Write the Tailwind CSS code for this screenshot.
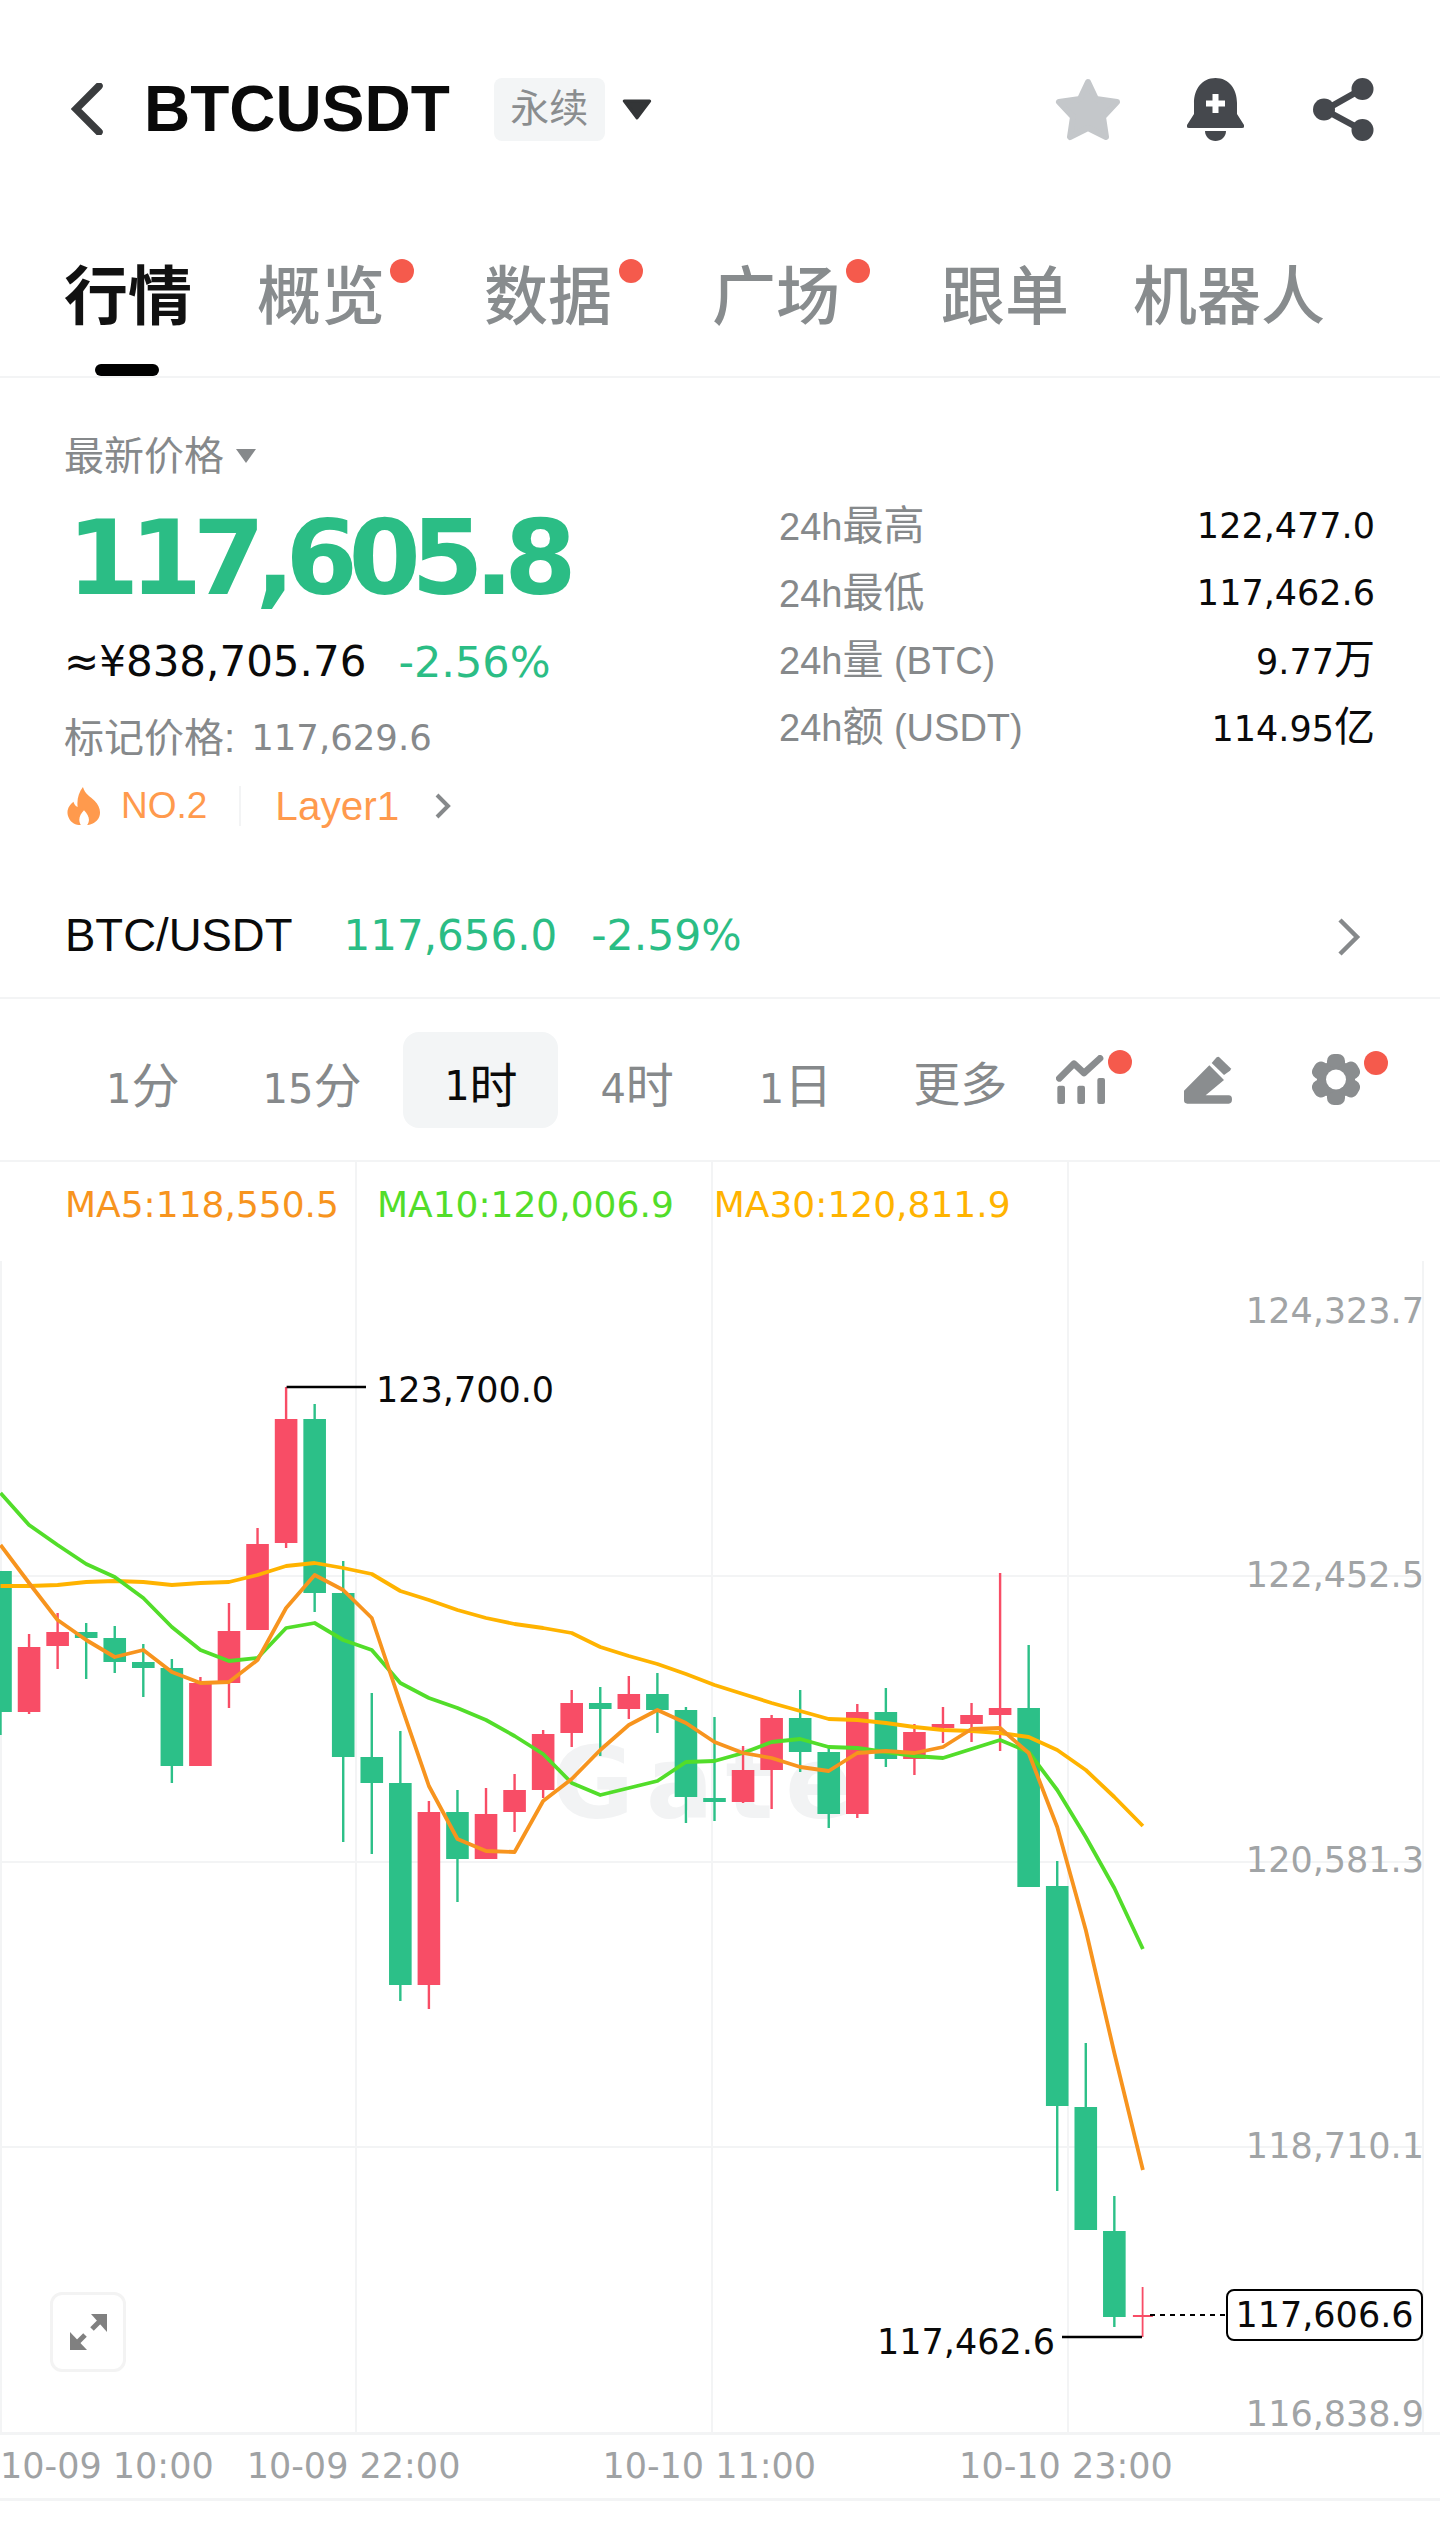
<!DOCTYPE html>
<html lang="zh-CN">
  <head>
    <meta charset="UTF-8" />
    <meta name="viewport" content="width=device-width, initial-scale=1.0" />
    <title>BTCUSDT 永续</title>
    <script src="https://cdn.jsdelivr.net/npm/@tailwindcss/browser@4"></script>
  </head>
  <body class="bg-white min-h-screen font-['Liberation_Sans','Noto_Sans_CJK_SC',sans-serif]">
    <div class="w-[1440px] h-[2521px] overflow-hidden">
      <!-- header -->
      <header class="h-[216px] pt-[2px] flex items-center pl-[71px]">
        <svg class="w-[32px] h-[52px]" viewBox="0 0 32 52" fill="none">
          <polyline points="28,3 5,26 28,49" stroke="#3a3c3e" stroke-width="7.5" stroke-linecap="round" stroke-linejoin="miter" />
        </svg>
        <h1 class="ml-[41px] text-[64px] leading-[64px] font-bold text-[#0a0a0a]">BTCUSDT</h1>
        <span class="ml-[44px] w-[111px] h-[63px] rounded-lg bg-[#f3f5f6] flex items-center justify-center text-[39px] text-[#8a8d8f]">永续</span>
        <svg class="ml-[16px] w-[32px] h-[21px]" viewBox="0 0 30 20">
          <path d="M3 2 H27 L15 18 Z" fill="#333537" stroke="#333537" stroke-width="3" stroke-linejoin="round" />
        </svg>
        <div class="ml-auto mr-[66px] flex items-center">
          <svg class="w-[66px] h-[63px]" viewBox="0 0 66 63">
            <path d="M33 4 L41 21 L62 24 L48 39 L51 59 L33 50 L15 59 L18 39 L4 24 L25 21 Z" fill="#c4c7ca" stroke="#c4c7ca" stroke-width="6" stroke-linejoin="round" />
          </svg>
          <svg class="ml-[66px] w-[57px] h-[63px]" viewBox="0 0 57 63">
            <path d="M28.5 0 C15 0 7 11 7 25 V36 L0 47 Q-1 50 2 50 H55 Q58 50 57 47 L50 36 V25 C50 11 42 0 28.5 0 Z" fill="#45484d" />
            <path d="M18 53 H39 C39 59 34 63 28.5 63 C23 63 18 59 18 53 Z" fill="#45484d" />
            <path d="M28.5 16 V35 M19 25.5 H38" stroke="#ffffff" stroke-width="6" />
          </svg>
          <svg class="ml-[69px] w-[61px] h-[63px]" viewBox="0 0 61 63" fill="#45484d">
            <path d="M49 11 L12 32 L49 52" fill="none" stroke="#45484d" stroke-width="6.5" />
            <circle cx="49.5" cy="11" r="11" />
            <circle cx="11" cy="31.5" r="11" />
            <circle cx="49.5" cy="52" r="11" />
          </svg>
        </div>
      </header>

      <!-- tabs -->
      <nav class="relative h-[162px] border-b-2 border-[#f3f4f5] flex pl-[64px] pt-[49px] text-[64px] leading-[64px] font-medium text-[#888c8e]">
        <a class="relative font-bold text-[#111111]">行情
          <span class="absolute left-[31px] top-[99px] w-[64px] h-[12px] rounded-md bg-black"></span>
        </a>
        <a class="relative ml-[65px]">概览<span class="absolute left-[133px] -top-[6px] w-[24px] h-[24px] rounded-full bg-[#f55a4c]"></span></a>
        <a class="relative ml-[99px]">数据<span class="absolute left-[135px] -top-[6px] w-[24px] h-[24px] rounded-full bg-[#f55a4c]"></span></a>
        <a class="relative ml-[100px]">广场<span class="absolute left-[134px] -top-[6px] w-[24px] h-[24px] rounded-full bg-[#f55a4c]"></span></a>
        <a class="ml-[101px]">跟单</a>
        <a class="ml-[64px]">机器人</a>
      </nav>

      <!-- price summary -->
      <section class="flex justify-between pl-[64px] pr-[65px] h-[450px]">
        <div>
          <div class="pt-[58px] flex items-center text-[40px] leading-[40px] text-[#86898b]">
            最新价格
            <svg class="ml-[12px] w-[20px] h-[14px]" viewBox="0 0 20 14"><path d="M0 0 H20 L10 14 Z" fill="#86898b" /></svg>
          </div>
          <div class="mt-[28px] ml-[3px] font-['DejaVu_Sans',sans-serif] font-bold text-[104px] leading-[108px] tracking-[-9.5px] text-[#2bbd85]">117,605.8</div>
          <div class="mt-[26px] flex text-[42px] leading-[48px] font-['DejaVu_Sans','Noto_Sans_CJK_SC',sans-serif]">
            <span class="text-[#0a0a0a]">≈¥838,705.76</span>
            <span class="ml-[32px] text-[43px] text-[#2bbd85]">-2.56%</span>
          </div>
          <div class="mt-[30px] flex items-center text-[#86898b] leading-[44px]">
            <span class="text-[40px]">标记价格:</span>
            <span class="ml-[16px] text-[35.5px] font-['DejaVu_Sans',sans-serif]">117,629.6</span>
          </div>
          <div class="mt-[24px] flex items-center leading-[44px] text-[#ff9a4d]">
            <svg class="ml-[3px] w-[34px] h-[38px]" viewBox="0 0 32 36">
              <path d="M15 0 C17 7 22 9 26 13 C32 19 33 27 28 32 C25 35 21 36 19 36 C22 32 21 27 16 22 C12 26 10 31 13 36 C8 36 4 34 2 30 C-2 23 2 17 6 14 C7 17 8 18 10 19 C9 12 11 5 15 0 Z" fill="#ff9a4d" />
            </svg>
            <span class="ml-[20px] text-[37px]">NO.2</span>
            <span class="ml-[32px] w-[2px] h-[40px] bg-[#f3f4f5]"></span>
            <span class="ml-[34px] text-[40.5px]">Layer1</span>
            <svg class="ml-[36px] w-[16px] h-[26px]" viewBox="0 0 16 26" fill="none">
              <polyline points="2,2 13,13 2,24" stroke="#86898b" stroke-width="4" />
            </svg>
          </div>
        </div>
        <dl class="w-[596px] pt-[115px] text-[#86898b]">
          <div class="h-[67px] flex items-center justify-between">
            <dt class="text-[38px]">24h<span class="text-[41px]">最高</span></dt>
            <dd class="text-[35px] text-[#0a0a0a] font-['DejaVu_Sans',sans-serif]">122,477.0</dd>
          </div>
          <div class="h-[67px] flex items-center justify-between">
            <dt class="text-[38px]">24h<span class="text-[41px]">最低</span></dt>
            <dd class="text-[35px] text-[#0a0a0a] font-['DejaVu_Sans',sans-serif]">117,462.6</dd>
          </div>
          <div class="h-[67px] flex items-center justify-between">
            <dt class="text-[38px]">24h<span class="text-[41px]">量</span> (BTC)</dt>
            <dd class="text-[35px] text-[#0a0a0a] font-['DejaVu_Sans','Noto_Sans_CJK_SC',sans-serif]">9.77<span class="text-[41px]">万</span></dd>
          </div>
          <div class="h-[67px] flex items-center justify-between">
            <dt class="text-[38px]">24h<span class="text-[41px]">额</span> (USDT)</dt>
            <dd class="text-[35px] text-[#0a0a0a] font-['DejaVu_Sans','Noto_Sans_CJK_SC',sans-serif]">114.95<span class="text-[41px]">亿</span></dd>
          </div>
        </dl>
      </section>

      <!-- spot pair row -->
      <div class="h-[171px] pt-[83px] pl-[65px] pr-[79px] border-b-2 border-[#f3f4f5] flex items-start leading-[50px]">
        <span class="text-[45.5px] text-[#0a0a0a]">BTC/USDT</span>
        <span class="ml-[51px] text-[42px] text-[#2bbd85] font-['DejaVu_Sans',sans-serif]">117,656.0</span>
        <span class="ml-[34px] text-[42.5px] text-[#2bbd85] font-['DejaVu_Sans',sans-serif]">-2.59%</span>
        <svg class="ml-auto mt-[7px] w-[24px] h-[38px]" viewBox="0 0 24 38" fill="none">
          <polyline points="3,2 20,19 3,36" stroke="#86898b" stroke-width="4.5" />
        </svg>
      </div>

      <!-- interval toolbar -->
      <div class="h-[163px] border-b-2 border-[#f3f4f5] flex items-center text-[#86898b] font-['DejaVu_Sans','Noto_Sans_CJK_SC',sans-serif] text-[40px]">
        <span class="ml-[106px] pt-[12px]">1<span class="text-[48px]">分</span></span>
        <span class="ml-[83px] pt-[12px]">15<span class="text-[48px]">分</span></span>
        <span class="ml-[42px] w-[155px] h-[96px] pt-[12px] rounded-2xl bg-[#f3f5f6] text-[#0a0a0a] flex items-center justify-center">1<span class="text-[48px]">时</span></span>
        <span class="ml-[42px] pt-[12px]">4<span class="text-[48px]">时</span></span>
        <span class="ml-[85px] pt-[12px]">1<span class="text-[48px]">日</span></span>
        <span class="ml-[81px] pt-[12px] text-[47px]">更多</span>
        <div class="relative ml-[49px] w-[49px] h-[49px]">
          <svg class="w-[49px] h-[49px]" viewBox="48 78 147 147" fill="#8a8d8f">
            <rect x="52" y="170" width="23" height="55" rx="6" />
            <rect x="112" y="170" width="23" height="55" rx="6" />
            <rect x="172" y="147" width="23" height="78" rx="6" />
            <polyline points="58,148 102,104 132,132 180,88" fill="none" stroke="#8a8d8f" stroke-width="20" stroke-linecap="round" stroke-linejoin="round" />
          </svg>
          <span class="absolute left-[52px] -top-[5px] w-[24px] h-[24px] rounded-full bg-[#f55a4c]"></span>
        </div>
        <svg class="ml-[79px] w-[48px] h-[48px]" viewBox="432 80 144 142" fill="#8a8d8f">
          <path d="M432 183 L508 107 L552 151 L497 197 H566 Q576 197 576 209 Q576 222 566 222 H442 Q432 222 432 212 Z" />
          <path d="M537 82 L572 116 Q574 120 570 123 L552 136 L515 100 L530 83 Q534 80 537 82 Z" />
        </svg>
        <div class="relative ml-[80px] w-[48px] h-[51px]">
          <svg class="w-[48px] h-[51px]" viewBox="0 0 48 51" fill="#8a8d8f">
            <circle cx="24" cy="25.5" r="19" />
            <rect x="15" y="0" width="18" height="51" rx="7" />
            <rect x="15" y="0" width="18" height="51" rx="7" transform="rotate(60 24 25.5)" />
            <rect x="15" y="0" width="18" height="51" rx="7" transform="rotate(120 24 25.5)" />
            <circle cx="24" cy="25.5" r="10" fill="#ffffff" />
          </svg>
          <span class="absolute left-[52px] -top-[3px] w-[24px] h-[24px] rounded-full bg-[#f55a4c]"></span>
        </div>
      </div>

      <!-- chart -->
      <div class="relative h-[1270px] font-['DejaVu_Sans',sans-serif]">
        <svg id="chart" class="absolute inset-0 w-[1440px] h-[1270px]" viewBox="0 1162 1440 1270"></svg>

        <div class="relative flex pl-[65px] pt-[24px] text-[36px] leading-[38px]">
          <span class="text-[#f7941e]">MA5:118,550.5</span>
          <span class="ml-[38px] text-[#52dd2a]">MA10:120,006.9</span>
          <span class="ml-[40px] text-[#ffb300]">MA30:120,811.9</span>
        </div>

        <span class="absolute right-[16px] top-[129px] text-[35px] leading-[40px] text-[#a1a4a6]">124,323.7</span>
        <span class="absolute right-[16px] top-[393px] text-[35px] leading-[40px] text-[#a1a4a6]">122,452.5</span>
        <span class="absolute right-[16px] top-[678px] text-[35px] leading-[40px] text-[#a1a4a6]">120,581.3</span>
        <span class="absolute right-[16px] top-[964px] text-[35px] leading-[40px] text-[#a1a4a6]">118,710.1</span>
        <span class="absolute right-[16px] top-[1232px] text-[35px] leading-[40px] text-[#a1a4a6]">116,838.9</span>

        <span class="absolute left-[376px] top-[208px] text-[35px] leading-[40px] text-[#0a0a0a]">123,700.0</span>
        <span class="absolute left-[877px] top-[1160px] text-[35px] leading-[40px] text-[#0a0a0a]">117,462.6</span>
        <span class="absolute left-[1226px] top-[1127px] w-[197px] h-[52px] rounded-lg border-2 border-black bg-white flex items-center justify-center text-[35px] text-[#0a0a0a]">117,606.6</span>

        <button class="absolute left-[50px] top-[1130px] w-[76px] h-[80px] rounded-xl border-[3px] border-[#f3f3f3] bg-white flex items-center justify-center">
          <svg class="w-[37px] h-[36px]" viewBox="0 0 37 36" fill="#808080">
            <path d="M21 0 H37 V18 Z" />
            <path d="M0 18 V36 H17 Z" />
            <path d="M30 7 L22 15 M7 29 L15 21" stroke="#808080" stroke-width="5" />
          </svg>
        </button>
      </div>

      <!-- time axis -->
      <div class="h-[69px] border-t-[3px] border-b-[3px] border-[#f3f4f5] flex items-center text-[35px] text-[#9fa2a4] font-['DejaVu_Sans',sans-serif]">
        <span>10-09 10:00</span>
        <span class="ml-[33px]">10-09 22:00</span>
        <span class="ml-[142px]">10-10 11:00</span>
        <span class="ml-[143px]">10-10 23:00</span>
      </div>
    </div>

    <script>
      // candle values are page pixels: wick top, body top, body bottom, wick bottom
      const candles = [
        ["g", 1571, 1571, 1712, 1735], ["r", 1634, 1647, 1712, 1714], ["r", 1613, 1632, 1646, 1669],
        ["g", 1623, 1632, 1638, 1679], ["g", 1626, 1638, 1662, 1673], ["g", 1644, 1662, 1668, 1697],
        ["g", 1659, 1668, 1766, 1783], ["r", 1677, 1683, 1766, 1766], ["r", 1603, 1631, 1683, 1708],
        ["r", 1528, 1544, 1630, 1630], ["r", 1387, 1419, 1543, 1548], ["g", 1404, 1419, 1593, 1612],
        ["g", 1561, 1593, 1757, 1842], ["g", 1693, 1757, 1783, 1854], ["g", 1731, 1783, 1985, 2001],
        ["r", 1801, 1812, 1985, 2009], ["g", 1790, 1812, 1859, 1902], ["r", 1788, 1814, 1859, 1859],
        ["r", 1774, 1790, 1812, 1832], ["r", 1730, 1734, 1790, 1798], ["r", 1690, 1703, 1733, 1747],
        ["g", 1687, 1703, 1709, 1756], ["r", 1676, 1694, 1709, 1719], ["g", 1673, 1694, 1710, 1733],
        ["g", 1707, 1710, 1797, 1823], ["g", 1717, 1798, 1802, 1821], ["r", 1746, 1770, 1802, 1803],
        ["r", 1715, 1718, 1770, 1809], ["g", 1690, 1718, 1752, 1772], ["g", 1748, 1752, 1814, 1828],
        ["r", 1704, 1712, 1814, 1818], ["g", 1688, 1712, 1759, 1767], ["r", 1724, 1732, 1759, 1775],
        ["r", 1707, 1724, 1728, 1743], ["r", 1703, 1715, 1724, 1742], ["r", 1573, 1708, 1715, 1751],
        ["g", 1645, 1708, 1887, 1887], ["g", 1861, 1886, 2106, 2191], ["g", 2043, 2107, 2230, 2230],
        ["g", 2196, 2231, 2317, 2327], ["r", 2287, 2315, 2317, 2337],
      ];
      const ma5 = [1545, 1583, 1620, 1640, 1657, 1650, 1672, 1683, 1682, 1660, 1608, 1575, 1590, 1618, 1703, 1786, 1839, 1851, 1852, 1801, 1779, 1750, 1725, 1710, 1723, 1742, 1753, 1758, 1767, 1771, 1753, 1751, 1753, 1747, 1729, 1728, 1753, 1827, 1930, 2053, 2170];
      const ma10 = [1493, 1525, 1545, 1564, 1577, 1598, 1627, 1650, 1661, 1658, 1628, 1623, 1640, 1650, 1683, 1698, 1708, 1720, 1736, 1754, 1783, 1795, 1788, 1781, 1762, 1761, 1753, 1742, 1739, 1747, 1748, 1752, 1756, 1758, 1749, 1740, 1752, 1790, 1837, 1888, 1949];
      const ma30 = [1586, 1586, 1585, 1582, 1581, 1582, 1585, 1583, 1582, 1575, 1566, 1563, 1568, 1574, 1591, 1600, 1610, 1618, 1624, 1628, 1633, 1647, 1656, 1664, 1674, 1685, 1694, 1703, 1711, 1719, 1720, 1723, 1727, 1730, 1731, 1733, 1737, 1750, 1770, 1797, 1826];

      const colors = { g: "#2cc088", r: "#f84d66" };
      const xAt = (i) => 0.5 + i * 28.56;
      let svg = "";

      // grid
      [1576, 1862, 2147].forEach((y) => {
        svg += `<line x1="0" x2="1423" y1="${y}" y2="${y}" stroke="#f3f4f5" stroke-width="2"/>`;
      });
      [356, 712, 1068].forEach((x) => {
        svg += `<line x1="${x}" x2="${x}" y1="1162" y2="2432" stroke="#f3f4f5" stroke-width="2"/>`;
      });
      [1, 1423].forEach((x) => {
        svg += `<line x1="${x}" x2="${x}" y1="1261" y2="2432" stroke="#f3f4f5" stroke-width="2"/>`;
      });

      // watermark
      svg += `<text x="552" y="1818" font-family="DejaVu Sans" font-weight="700" font-size="100" letter-spacing="12" fill="#f2f3f4">Gate</text>`;

      // candles
      candles.forEach(([c, wt, bt, bb, wb], i) => {
        const x = xAt(i);
        const last = i === candles.length - 1;
        svg += `<rect x="${x - 1.2}" y="${wt}" width="${last ? 1.8 : 2.4}" height="${wb - wt}" fill="${colors[c]}"/>`;
        if (last) {
          svg += `<rect x="${x - 10}" y="${bt}" width="20" height="${bb - bt}" fill="${colors[c]}"/>`;
        } else {
          svg += `<rect x="${x - 11.3}" y="${bt}" width="22.6" height="${bb - bt}" fill="${colors[c]}"/>`;
        }
      });

      // moving averages
      [[ma5, "#f7941e"], [ma10, "#52dd2a"], [ma30, "#ffb300"]]
        .reverse()
        .forEach(([line, stroke]) => {
          const points = line.map((y, i) => `${xAt(i)},${y}`).join(" ");
          svg += `<polyline points="${points}" fill="none" stroke="${stroke}" stroke-width="3.8" stroke-linejoin="round"/>`;
        });

      // high / low markers
      svg += `<path d="M286.6 1387 H366" stroke="#000" stroke-width="2.4" fill="none"/>`;
      svg += `<path d="M1062 2337 H1142" stroke="#000" stroke-width="2.4" fill="none"/>`;
      svg += `<path d="M1150 2315 H1226" stroke="#000" stroke-width="2" stroke-dasharray="5 5" fill="none"/>`;

      document.getElementById("chart").innerHTML = svg;
    </script>
  </body>
</html>
